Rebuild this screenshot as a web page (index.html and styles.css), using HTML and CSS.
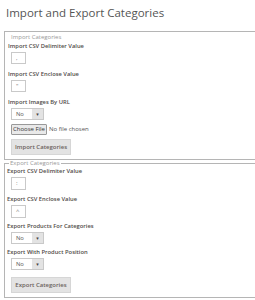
FILE: index.html
```html
<!DOCTYPE html>
<html>
  <head>
    <meta charset="UTF-8">
    <title>Import and Export Categories</title>
    <link rel="stylesheet" href="styles.css">
  </head>
  <body>
    <h1 class="page-title">Import and Export Categories</h1>

    <div class="box box-import">
      <div class="box-title">Import Categories</div>
      <div class="field first">
        <div class="label">Import CSV Delimiter Value</div>
        <div class="small-input">,</div>
      </div>
      <div class="field">
        <div class="label">Import CSV Enclose Value</div>
        <div class="small-input">"</div>
      </div>
      <div class="field">
        <div class="label">Import Images By URL</div>
        <div class="select"><span class="select-value">No</span><span class="select-arrow">&#9662;</span></div>
      </div>
      <div class="file-row">
        <span class="file-btn">Choose File</span><span class="file-text">No file chosen</span>
      </div>
      <div class="action-btn">Import Categories</div>
    </div>

    <fieldset class="box box-export">
      <legend>Export Categories</legend>
      <div class="field first">
        <div class="label">Export CSV Delimiter Value</div>
        <div class="small-input tall">:</div>
      </div>
      <div class="field">
        <div class="label">Export CSV Enclose Value</div>
        <div class="small-input tall">^</div>
      </div>
      <div class="field">
        <div class="label">Export Products For Categories</div>
        <div class="select"><span class="select-value">No</span><span class="select-arrow">&#9662;</span></div>
      </div>
      <div class="field">
        <div class="label">Export With Product Position</div>
        <div class="select"><span class="select-value">No</span><span class="select-arrow">&#9662;</span></div>
      </div>
      <div class="action-btn">Export Categories</div>
    </fieldset>
  </body>
</html>
```

FILE: styles.css
```css
html, body{
    margin: 0;
    padding: 0;
    background: #fff;
}
body{
    font-family: "Open Sans", "DejaVu Sans", sans-serif;
    color: #41362f;
}
.page-title{
    margin: 0 0 0 6px;
    padding-top: 5px;
    height: 15px;
    font-size: 11.5px;
    line-height: 16px;
    font-weight: 400;
    color: #555;
}
.box{
    width: 251px;
    margin: 0 0 0 4px;
    border: 1px solid #b5b5b5;
    border-right: none;
    box-sizing: border-box;
}
.box-import{
    margin-top: 11px;
    height: 129px;
    padding: 1px 0 0 3px;
}
.box-title{
    font-size: 6px;
    line-height: 9px;
    color: #999;
    margin-left: 3px;
}
.field{
    display: flex;
    flex-direction: column;
}
.label{
    font-size: 5.8px;
    line-height: 9px;
    font-weight: 600;
    color: #4f4a47;
    margin-top: 6px;
}
.box-import .field.first .label{
    margin-top: 0;
}
.small-input{
    margin: 1px 0 0 3px;
    width: 15px;
    height: 12px;
    border: 1px solid #c9c9c9;
    box-sizing: border-box;
    font-size: 6px;
    line-height: 10px;
    color: #777;
    padding-left: 4px;
}
.small-input.tall{
    height: 13px;
    line-height: 11px;
}
.select{
    margin: 1px 0 0 3px;
    width: 33px;
    height: 12px;
    border: 1px solid #c9c9c9;
    box-sizing: border-box;
    display: flex;
    font-size: 5.8px;
    line-height: 10px;
    color: #555;
}
.select-value{
    flex: 1;
    padding-left: 4px;
}
.select-arrow{
    width: 11px;
    background: #e3e3e3;
    text-align: center;
    font-size: 5px;
    color: #444;
}
.file-row{
    margin: 4px 0 0 3px;
    display: flex;
    align-items: center;
    font-size: 6px;
    line-height: 11px;
    white-space: nowrap;
}
.file-btn{
    width: 36px;
    height: 11px;
    box-sizing: border-box;
    border: 1px solid #999;
    border-radius: 1px;
    background: #e9e9e9;
    text-align: center;
    font-size: 6px;
    line-height: 9px;
    color: #333;
}
.file-text{
    margin-left: 2px;
    color: #555;
}
.action-btn{
    margin: 4px 0 0 3px;
    width: 60px;
    height: 16px;
    background: #e3e3e3;
    border: 1px solid #d6d6d6;
    box-sizing: border-box;
    font-size: 6px;
    font-weight: 600;
    line-height: 14px;
    text-align: center;
    color: #6b625c;
}
.box-export{
    height: 138px;
    padding: 0 0 0 2px;
}
.box-export legend{
    font-size: 6px;
    line-height: 6px;
    color: #999;
    padding: 0 1px;
    margin-left: 2px;
}
.box-export .label{
    margin-top: 4px;
}
.box-export .field.first .label{
    margin-top: 1px;
}
.box-export .field:nth-of-type(2) .label{
    margin-top: 5px;
}
.box-export .small-input,
.box-export .select,
.box-export .action-btn{
    margin-left: 4px;
}
.box-export .action-btn{
    margin-top: 7px;
}
```
